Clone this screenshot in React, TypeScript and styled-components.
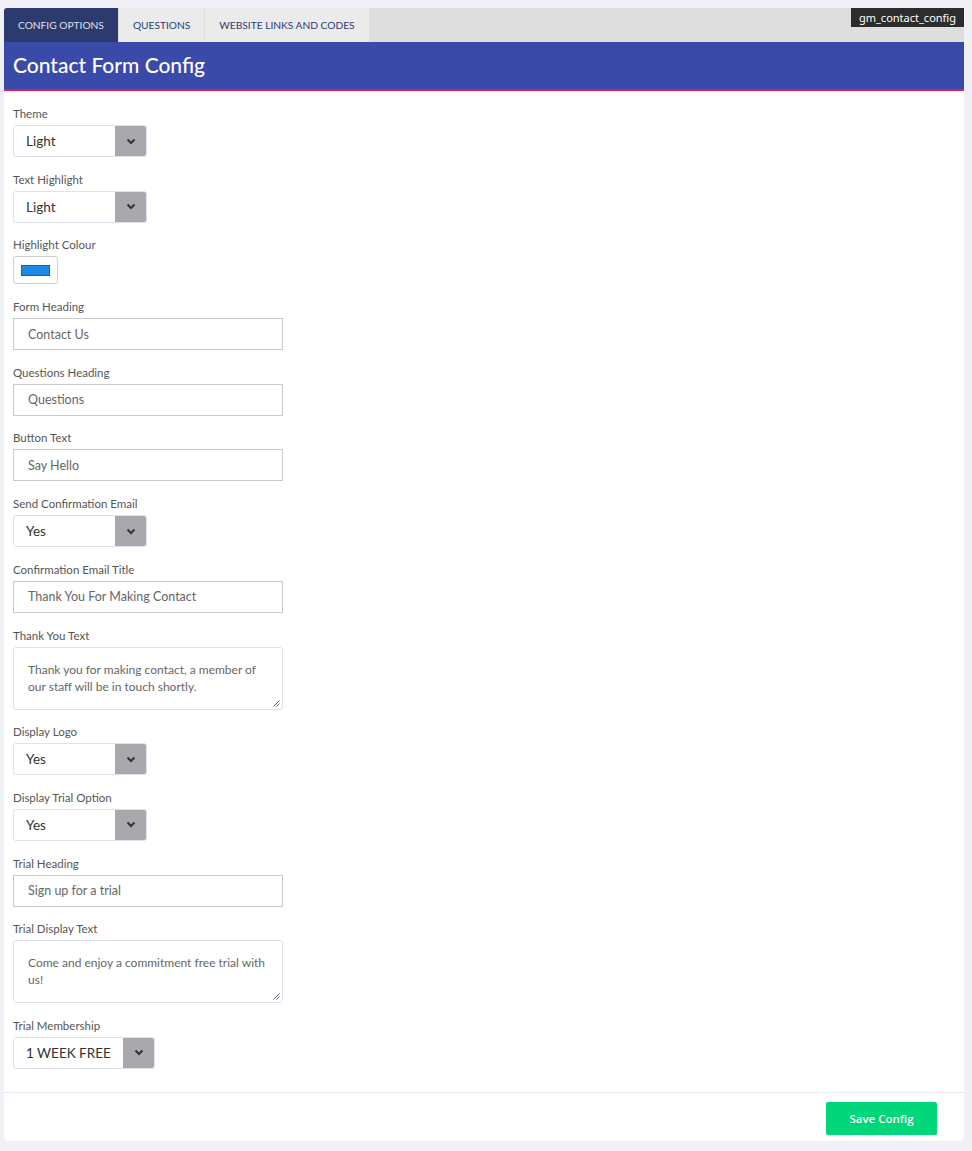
import React from "react";
import styled, { createGlobalStyle } from "styled-components";

const Global = createGlobalStyle`
  html, body { margin: 0; padding: 0; background: #f0f1f6; }
  body { font-family: Lato, "Liberation Sans", sans-serif; }
  * { box-sizing: border-box; }
`;

const Page = styled.div`
  padding: 8px 8px 10px 4px;
`;

const TabBar = styled.div`
  position: relative;
  display: flex;
  gap: 1px;
  height: 34px;
  background: #dedede;
  border-radius: 3px 3px 0 0;
`;

const Tab = styled.div<{ $active?: boolean }>`
  display: flex;
  align-items: center;
  padding: 0 14px;
  font-family: Lato, sans-serif;
  font-size: 10.2px;
  text-transform: uppercase;
  background: ${(p) => (p.$active ? "#2b3b6d" : "#ebebeb")};
  color: ${(p) => (p.$active ? "#dde2ee" : "#2b3b6d")};
  border-radius: ${(p) => (p.$active ? "3px 0 0 0" : "0")};
`;

const Badge = styled.div`
  position: absolute;
  top: 0;
  right: 0;
  height: 19px;
  padding: 0 8px;
  display: flex;
  align-items: center;
  background: #2d2d2d;
  color: #fff;
  font-family: "Noto Sans", sans-serif;
  font-size: 11px;
`;

const Card = styled.div`
  background: #fff;
  border-radius: 0 0 5px 5px;
`;

const Header = styled.div`
  height: 49px;
  background: #3a4aa8;
  border-bottom: 2px solid #e8195e;
  display: flex;
  align-items: center;
  padding: 0 9px 2px;
`;

const Title = styled.h1`
  margin: 0;
  color: #fff;
  font-family: Lato, sans-serif;
  font-weight: 500;
  font-size: 21px;
`;

const Body = styled.div`
  padding: 16px 9px 23px;
`;

const Field = styled.div`
  margin-bottom: 15.7px;
  &:last-child { margin-bottom: 0; }
`;

const Label = styled.div`
  font-family: Lato, sans-serif;
  font-size: 11.5px;
  line-height: 14px;
  color: #555;
  margin-bottom: 4px;
`;

const SelectBox = styled.div<{ $w: number }>`
  width: ${(p) => p.$w}px;
  height: 32px;
  display: flex;
  border: 1px solid #e0e0ee;
  border-radius: 3px;
  overflow: hidden;
`;

const SelectValue = styled.div`
  flex: 1;
  display: flex;
  align-items: center;
  padding-left: 12px;
  font-family: Lato, sans-serif;
  font-size: 13.5px;
  color: #333;
`;

const Arrow = styled.div`
  width: 31px;
  background: #a9a9ad;
  display: flex;
  align-items: center;
  justify-content: center;
`;

const TextInput = styled.div`
  width: 270px;
  height: 32px;
  border: 1px solid #c9c9c9;
  display: flex;
  align-items: center;
  padding-left: 14px;
  font-family: Lato, sans-serif;
  font-size: 12.5px;
  color: #666;
`;

const TextArea = styled.div`
  position: relative;
  width: 270px;
  height: 63px;
  border: 1px solid #e0e0ee;
  border-radius: 3px;
  padding: 13px 8px 13px 14px;
  font-family: Lato, sans-serif;
  font-size: 12px;
  line-height: 17px;
  color: #666;
`;

const Grip = styled.svg`
  position: absolute;
  right: 2px;
  bottom: 2px;
`;

const ColorBox = styled.div`
  width: 45px;
  height: 28px;
  border: 1px solid #cfcfcf;
  border-radius: 3px;
  display: flex;
  align-items: center;
  justify-content: center;
`;

const Swatch = styled.div`
  width: 29px;
  height: 11px;
  background: #1e88e5;
  border: 1px solid #555;
`;

const Footer = styled.div`
  border-top: 1px solid #e8e8ee;
  display: flex;
  justify-content: flex-end;
  padding: 9px 27px 6px;
`;

const SaveButton = styled.button`
  width: 111px;
  height: 33px;
  border: none;
  border-radius: 2px;
  background: #00d67a;
  color: #fff;
  font-family: "Open Sans", sans-serif;
  font-weight: 600;
  font-size: 11.5px;
`;

const Chevron = () => (
  <svg width="10" height="7" viewBox="0 0 10 7">
    <path d="M1.5 1.5 L5 5 L8.5 1.5" fill="none" stroke="#333" strokeWidth="2" />
  </svg>
);

const Select = ({ value, w = 134 }: { value: string; w?: number }) => (
  <SelectBox $w={w}>
    <SelectValue>{value}</SelectValue>
    <Arrow>
      <Chevron />
    </Arrow>
  </SelectBox>
);

const Area = ({ children }: { children: React.ReactNode }) => (
  <TextArea>
    {children}
    <Grip width="7" height="7" viewBox="0 0 7 7">
      <path d="M6.5 0.5 L0.5 6.5 M6.5 3.5 L3.5 6.5" stroke="#555" strokeWidth="0.9" />
    </Grip>
  </TextArea>
);

export default function App() {
  return (
    <>
      <Global />
      <Page>
        <TabBar>
          <Tab $active>Config Options</Tab>
          <Tab>Questions</Tab>
          <Tab>Website Links and Codes</Tab>
          <Badge>gm_contact_config</Badge>
        </TabBar>
        <Card>
          <Header>
            <Title>Contact Form Config</Title>
          </Header>
          <Body>
            <Field>
              <Label>Theme</Label>
              <Select value="Light" />
            </Field>
            <Field>
              <Label>Text Highlight</Label>
              <Select value="Light" />
            </Field>
            <Field>
              <Label>Highlight Colour</Label>
              <ColorBox>
                <Swatch />
              </ColorBox>
            </Field>
            <Field>
              <Label>Form Heading</Label>
              <TextInput>Contact Us</TextInput>
            </Field>
            <Field>
              <Label>Questions Heading</Label>
              <TextInput>Questions</TextInput>
            </Field>
            <Field>
              <Label>Button Text</Label>
              <TextInput>Say Hello</TextInput>
            </Field>
            <Field>
              <Label>Send Confirmation Email</Label>
              <Select value="Yes" />
            </Field>
            <Field>
              <Label>Confirmation Email Title</Label>
              <TextInput>Thank You For Making Contact</TextInput>
            </Field>
            <Field>
              <Label>Thank You Text</Label>
              <Area>Thank you for making contact, a member of our staff will be in touch shortly.</Area>
            </Field>
            <Field>
              <Label>Display Logo</Label>
              <Select value="Yes" />
            </Field>
            <Field>
              <Label>Display Trial Option</Label>
              <Select value="Yes" />
            </Field>
            <Field>
              <Label>Trial Heading</Label>
              <TextInput>Sign up for a trial</TextInput>
            </Field>
            <Field>
              <Label>Trial Display Text</Label>
              <Area>Come and enjoy a commitment free trial with us!</Area>
            </Field>
            <Field>
              <Label>Trial Membership</Label>
              <Select value="1 WEEK FREE" w={142} />
            </Field>
          </Body>
          <Footer>
            <SaveButton>Save Config</SaveButton>
          </Footer>
        </Card>
      </Page>
    </>
  );
}
